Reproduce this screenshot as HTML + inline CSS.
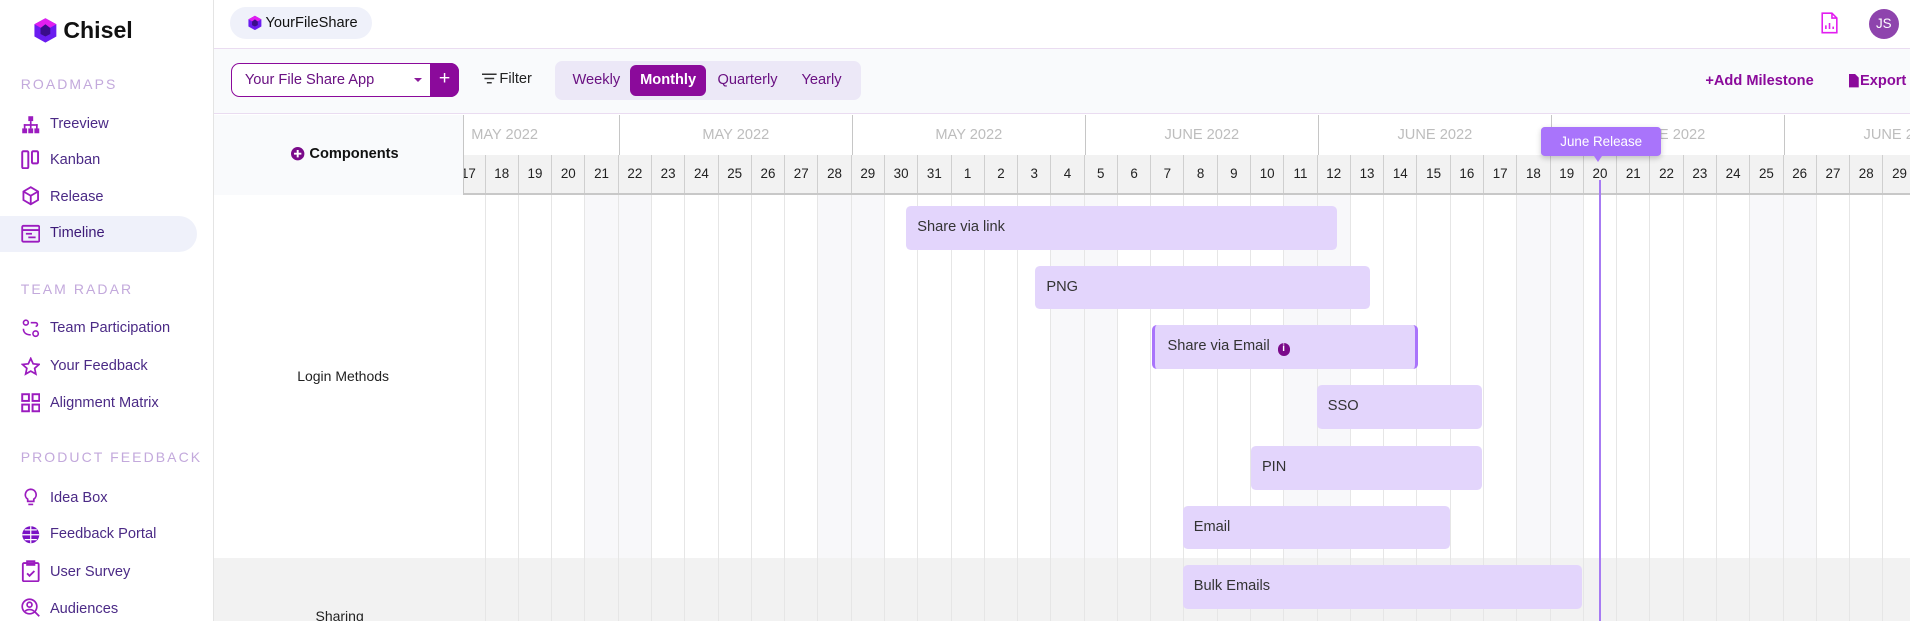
<!DOCTYPE html>
<html><head><meta charset="utf-8"><style>
*{box-sizing:border-box;margin:0;padding:0}
html,body{width:1910px;height:621px;overflow:hidden;background:#fff}
#w{zoom:1.2181;width:1568px;height:510px;position:relative;font-family:"Liberation Sans",sans-serif;overflow:hidden;white-space:nowrap}
.a{position:absolute}
.sb{left:0;top:0;width:176px;height:510px;border-right:1px solid #e4e4e4;background:#fff}
.sec{left:17px;font-size:11.5px;letter-spacing:1.7px;color:#c3a9dc}
.it{left:41px;font-size:12px;color:#4b2a86}
.ic{left:17px;width:16px;height:16px}
.day{display:flex;position:absolute;left:-9.7px;top:0;height:100%}
.day div{width:27.33px;flex:none;border-right:1px solid #cfcfcf;text-align:center}
.bd div{border-right:1px solid #e6e6e6}
.we{background:#f8f8fa}
.bar{position:absolute;height:36px;background:#e3d5fc;border-radius:4px;font-size:12px;color:#333;padding-left:9px;line-height:36px}
.ml{position:absolute;top:0;height:33px;border-left:1px solid #c6c6c6;font-size:12px;color:#bdbdbd;line-height:33px;text-align:center}
</style></head><body><div id="w">
<div class="a sb">
<svg class="a" style="left:26px;top:14px" width="22" height="22" viewBox="0 0 22 22"><polygon points="11,1 20,6 20,16 11,21 2,16 2,6" fill="#6a1cf0"/><polygon points="11,1 20,6 11,11 2,6" fill="#e21ef0"/><polygon points="11,6 15,9 15,14 11,16 7,14 7,9" fill="#3a0d8a"/></svg>
<div class="a" style="left:52px;top:14px;font-size:19px;font-weight:bold;color:#111">Chisel</div>
<div class="a sec" style="top:62px">ROADMAPS</div>
<svg class="a ic" style="top:94px" viewBox="0 0 16 16" fill="#9b1bbf"><rect x="6" y="1" width="4" height="4"/><rect x="1" y="11" width="4" height="4"/><rect x="6" y="11" width="4" height="4"/><rect x="11" y="11" width="4" height="4"/><rect x="7.3" y="5" width="1.4" height="6"/><rect x="2.3" y="7.5" width="11.4" height="1.4"/><rect x="2.3" y="7.5" width="1.4" height="4"/><rect x="12.3" y="7.5" width="1.4" height="4"/></svg>
<div class="a it" style="top:95px">Treeview</div>
<svg class="a ic" style="top:123px" viewBox="0 0 16 16" fill="none" stroke="#9b1bbf" stroke-width="1.6"><rect x="1" y="1" width="5" height="14" rx="1"/><rect x="9" y="1" width="5" height="10" rx="1"/></svg>
<div class="a it" style="top:125px">Kanban</div>
<svg class="a ic" style="top:153px" viewBox="0 0 16 16" fill="none" stroke="#9b1bbf" stroke-width="1.5"><path d="M8 1l6 3.5v7L8 15l-6-3.5v-7z M2 4.5L8 8l6-3.5 M8 8v7"/></svg>
<div class="a it" style="top:155px">Release</div>
<div class="a" style="left:0;top:177px;width:162px;height:30px;background:#eff1fa;border-radius:0 15px 15px 0"></div>
<svg class="a ic" style="top:184px" viewBox="0 0 16 16" fill="none" stroke="#9b1bbf" stroke-width="1.5"><rect x="1" y="1.5" width="14" height="13" rx="1"/><path d="M1 5h14 M4 8h5 M6 11h6"/></svg>
<div class="a it" style="top:185px;color:#3d1a78">Timeline</div>
<div class="a sec" style="top:231px">TEAM RADAR</div>
<svg class="a ic" style="top:262px" viewBox="0 0 16 16" fill="none" stroke="#9b1bbf" stroke-width="1.3"><circle cx="4" cy="3" r="2"/><circle cx="12" cy="12" r="2.2"/><path d="M2 8c0 3 2 5 6 5 M8 3h4c2 0 2 3 0 3"/></svg>
<div class="a it" style="top:263px">Team Participation</div>
<svg class="a ic" style="top:293px" viewBox="0 0 16 16" fill="none" stroke="#9b1bbf" stroke-width="1.4"><path d="M8 1.2l2 4.4 4.8.5-3.6 3.2 1 4.7L8 11.6 3.8 14l1-4.7L1.2 6.1l4.8-.5z"/></svg>
<div class="a it" style="top:294px">Your Feedback</div>
<svg class="a ic" style="top:323px" viewBox="0 0 16 16" fill="none" stroke="#9b1bbf" stroke-width="1.6"><rect x="1" y="1" width="5.5" height="5.5"/><rect x="9.5" y="1" width="5.5" height="5.5"/><rect x="1" y="9.5" width="5.5" height="5.5"/><rect x="9.5" y="9.5" width="5.5" height="5.5"/></svg>
<div class="a it" style="top:324px">Alignment Matrix</div>
<div class="a sec" style="top:369px">PRODUCT FEEDBACK</div>
<svg class="a ic" style="top:401px" viewBox="0 0 16 16" fill="none" stroke="#9b1bbf" stroke-width="1.4"><path d="M8 1a4.5 4.5 0 0 0-2.5 8.2V11h5V9.2A4.5 4.5 0 0 0 8 1z M6 13.5h4"/></svg>
<div class="a it" style="top:402px">Idea Box</div>
<svg class="a ic" style="top:431px" viewBox="0 0 16 16"><circle cx="8" cy="8" r="7" fill="#7a12c4"/><path d="M1 8h14 M8 1v14 M3 4h10 M3 12h10" stroke="#fff" stroke-width="1"/></svg>
<div class="a it" style="top:432px">Feedback Portal</div>
<svg class="a ic" style="top:460px;height:18px" viewBox="0 0 16 18" fill="none" stroke="#9b1bbf" stroke-width="1.5"><rect x="1.5" y="2.5" width="13" height="15" rx="1"/><rect x="5" y="1" width="6" height="3"/><path d="M5 11l2 2 4-4"/></svg>
<div class="a it" style="top:463px">User Survey</div>
<svg class="a ic" style="top:491px" viewBox="0 0 16 16" fill="none" stroke="#9b1bbf" stroke-width="1.4"><circle cx="7" cy="7" r="6"/><circle cx="7" cy="5.5" r="2"/><path d="M3.5 11c1-2 6-2 7 0 M11.5 11.5L15 15"/></svg>
<div class="a it" style="top:493px">Audiences</div>
</div>
<div class="a" style="left:176px;top:0;width:1392px;height:40px;border-bottom:1px solid #eadcf1;background:#fff"></div>
<div class="a" style="left:189px;top:6px;width:116px;height:26px;border-radius:13px;background:#eff1fa"></div>
<svg class="a" style="left:203px;top:12px" width="13" height="13" viewBox="0 0 22 22"><polygon points="11,1 20,6 20,16 11,21 2,16 2,6" fill="#6a1cf0"/><polygon points="11,1 20,6 11,11 2,6" fill="#e21ef0"/><polygon points="11,6 15,9 15,14 11,16 7,14 7,9" fill="#3a0d8a"/></svg>
<div class="a" style="left:218px;top:12px;font-size:12px;color:#111">YourFileShare</div>
<svg class="a" style="left:1495px;top:10px" width="14" height="18" viewBox="0 0 14 18" fill="none" stroke="#e21ef0" stroke-width="1.3"><path d="M1 1h8l4 4v12H1z M9 1v4h4 M4 14v-3 M7 14v-5 M10 14v-2"/></svg>
<div class="a" style="left:1534px;top:7px;width:25px;height:25px;border-radius:50%;background:#8e44ad;color:#fff;font-size:11px;text-align:center;line-height:25px">JS</div>
<div class="a" style="left:176px;top:40px;width:1392px;height:54px;background:#f9fafc;border-bottom:1px solid #eadcf1"></div>
<div class="a" style="left:190px;top:52px;width:187px;height:28px;border:1px solid #8b0a9b;border-radius:7px;background:#fff"></div>
<div class="a" style="left:201px;top:59px;font-size:12px;color:#6a1182">Your File Share App</div>
<div class="a" style="left:340px;top:64px;width:0;height:0;border:3.5px solid transparent;border-top:4px solid #8b1a9b"></div>
<div class="a" style="left:353px;top:52px;width:24px;height:28px;background:#8b0a9b;border-radius:0 7px 7px 0;color:#fff;font-size:16px;text-align:center;line-height:26px">+</div>
<svg class="a" style="left:396px;top:60px" width="12" height="9" viewBox="0 0 12 9" stroke="#333" stroke-width="1.2"><path d="M0 1h12 M2 4.5h8 M4 8h4"/></svg>
<div class="a" style="left:410px;top:58px;font-size:12px;color:#222">Filter</div>
<div class="a" style="left:456px;top:50px;width:251px;height:32px;border-radius:6px;background:#ece8f7"></div>
<div class="a" style="left:470px;top:59px;font-size:12px;color:#6a1182">Weekly</div>
<div class="a" style="left:517px;top:53px;width:63px;height:26px;border-radius:5px;background:#8b0a9b;color:#fff;font-size:12px;font-weight:bold;text-align:center;line-height:26px">Monthly</div>
<div class="a" style="left:589px;top:59px;font-size:12px;color:#6a1182">Quarterly</div>
<div class="a" style="left:658px;top:59px;font-size:12px;color:#6a1182">Yearly</div>
<div class="a" style="left:1400px;top:60px;font-size:12px;font-weight:bold;color:#8b0a9b">+Add Milestone</div>
<svg class="a" style="left:1518px;top:61px" width="8" height="11" viewBox="0 0 8 11" fill="#8b0a9b"><path d="M0 0h5l3 3v8H0z"/></svg>
<div class="a" style="left:1527px;top:60px;font-size:12px;font-weight:bold;color:#8b0a9b">Export</div>
<div class="a" style="left:176px;top:94px;width:205px;height:66px;background:#f9fafc;border-right:1px solid #c6c6c6"></div>
<svg class="a" style="left:239px;top:121px" width="11" height="11" viewBox="0 0 11 11"><circle cx="5.5" cy="5.5" r="5.5" fill="#7a0a8a"/><path d="M5.5 2.5v6 M2.5 5.5h6" stroke="#fff" stroke-width="1.6"/></svg>
<div class="a" style="left:254px;top:120px;font-size:12px;font-weight:bold;color:#111">Components</div>
<div class="a" style="left:176px;top:458px;width:1392px;height:52px;background:#f2f2f2"></div>
<div class="a" style="left:244px;top:302px;font-size:11.5px;color:#222">Login Methods</div>
<div class="a" style="left:259px;top:499px;font-size:11.5px;color:#222">Sharing</div>
<div class="a" style="left:381px;top:94px;width:1187px;height:416px;overflow:hidden">
 <div class="a" style="left:0;top:0;width:1187px;height:33px;background:#fff"></div>
 <div class="ml" style="left:-1px;width:128px;text-align:left;padding-left:6px">MAY 2022</div>
 <div class="ml" style="left:127px;width:191.3px">MAY 2022</div>
 <div class="ml" style="left:318.3px;width:191.3px">MAY 2022</div>
 <div class="ml" style="left:509.6px;width:191.3px">JUNE 2022</div>
 <div class="ml" style="left:700.9px;width:191.3px">JUNE 2022</div>
 <div class="ml" style="left:892.2px;width:191.3px">JUNE 2022</div>
 <div class="ml" style="left:1083.5px;width:191.3px">JUNE 2022</div>
 <div class="a" style="left:0;top:33px;width:1187px;height:33px;background:#f2f2f2;border-bottom:2px solid #c8c8c8">
  <div class="day" style="font-size:11px;color:#222;line-height:31px"><div>17</div><div>18</div><div>19</div><div>20</div><div>21</div><div>22</div><div>23</div><div>24</div><div>25</div><div>26</div><div>27</div><div>28</div><div>29</div><div>30</div><div>31</div><div>1</div><div>2</div><div>3</div><div>4</div><div>5</div><div>6</div><div>7</div><div>8</div><div>9</div><div>10</div><div>11</div><div>12</div><div>13</div><div>14</div><div>15</div><div>16</div><div>17</div><div>18</div><div>19</div><div>20</div><div>21</div><div>22</div><div>23</div><div>24</div><div>25</div><div>26</div><div>27</div><div>28</div><div>29</div></div>
 </div>
 <div class="a" style="left:0;top:66px;width:1187px;height:298px">
  <div class="day bd"><div></div><div></div><div></div><div></div><div class="we"></div><div class="we"></div><div></div><div></div><div></div><div></div><div></div><div class="we"></div><div class="we"></div><div></div><div></div><div></div><div></div><div></div><div class="we"></div><div class="we"></div><div></div><div></div><div></div><div></div><div></div><div class="we"></div><div class="we"></div><div></div><div></div><div></div><div></div><div></div><div class="we"></div><div class="we"></div><div></div><div></div><div></div><div></div><div></div><div class="we"></div><div class="we"></div><div></div><div></div><div></div></div>
 </div>
 <div class="a" style="left:0;top:364px;width:1187px;height:52px">
  <div class="day bd"><div></div><div></div><div></div><div></div><div></div><div></div><div></div><div></div><div></div><div></div><div></div><div></div><div></div><div></div><div></div><div></div><div></div><div></div><div></div><div></div><div></div><div></div><div></div><div></div><div></div><div></div><div></div><div></div><div></div><div></div><div></div><div></div><div></div><div></div><div></div><div></div><div></div><div></div><div></div><div></div><div></div><div></div><div></div><div></div></div>
 </div>
</div>
<div class="a" style="left:1313px;top:148px;width:1px;height:362px;background:#a77bf3"></div>
<div class="a" style="left:1265px;top:104px;width:99px;height:24px;background:#a974fb;border-radius:3px;color:#fff;font-size:11px;text-align:center;line-height:24px;box-shadow:0 2px 5px rgba(0,0,0,.2)">June Release</div>
<div class="a" style="left:1309px;top:128px;width:0;height:0;border:4px solid transparent;border-top:5px solid #a974fb"></div>
<div class="bar" style="left:744px;top:169px;width:354px">Share via link</div>
<div class="bar" style="left:850px;top:218px;width:275px">PNG</div>
<div class="bar" style="left:946px;top:267px;width:218px;border-left:3px solid #a974fb;border-right:3px solid #a974fb;padding-left:10px">Share via Email <span style="display:inline-block;width:10px;height:10px;border-radius:50%;background:#7a0a8a;color:#fff;font-size:8px;line-height:10px;text-align:center;font-weight:bold;vertical-align:-1px;margin-left:3px">i</span></div>
<div class="bar" style="left:1081px;top:316px;width:136px">SSO</div>
<div class="bar" style="left:1027px;top:366px;width:190px">PIN</div>
<div class="bar" style="left:971px;top:415px;width:219px">Email</div>
<div class="bar" style="left:971px;top:464px;width:328px">Bulk Emails</div>
</div></body></html>
